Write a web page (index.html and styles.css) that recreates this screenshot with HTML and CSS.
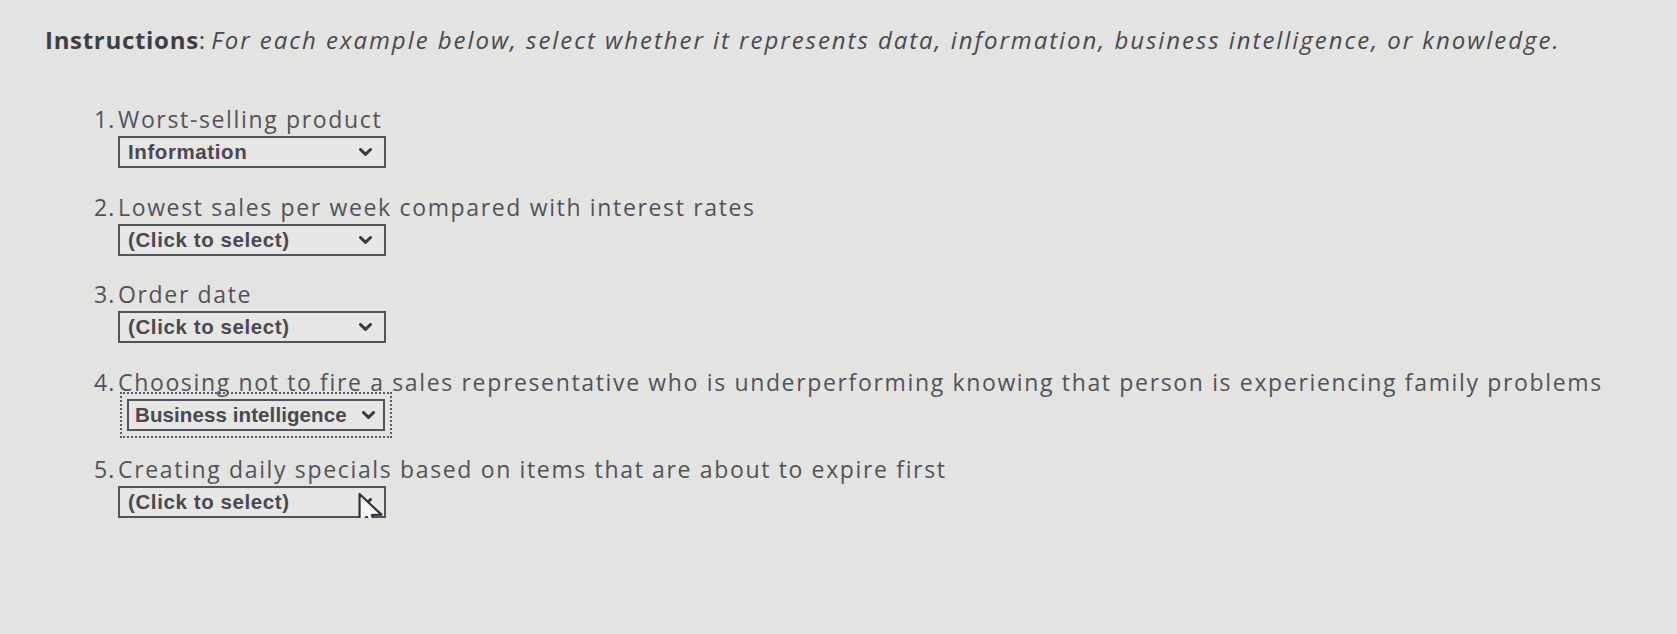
FILE: index.html
```html
<!DOCTYPE html>
<html>
<head>
<meta charset="utf-8">
<link rel="stylesheet" href="styles.css">
</head>
<body>
<div class="page">
  <p class="instructions"><b>Instructions</b>: <i>For each example below, select whether it represents data, information, business intelligence, or knowledge.</i></p>
  <ol class="items">
    <li class="item">
      <span class="num">1.</span>
      <div class="body">
        <div class="label">Worst-selling product</div>
        <div class="select"><span class="val">Information</span><svg class="chev" viewBox="0 0 13 8"><path d="M1.5 1.5 L6.5 6.3 L11.5 1.5" /></svg></div>
      </div>
    </li>
    <li class="item">
      <span class="num">2.</span>
      <div class="body">
        <div class="label">Lowest sales per week compared with interest rates</div>
        <div class="select"><span class="val">(Click to select)</span><svg class="chev" viewBox="0 0 13 8"><path d="M1.5 1.5 L6.5 6.3 L11.5 1.5" /></svg></div>
      </div>
    </li>
    <li class="item">
      <span class="num">3.</span>
      <div class="body">
        <div class="label">Order date</div>
        <div class="select"><span class="val">(Click to select)</span><svg class="chev" viewBox="0 0 13 8"><path d="M1.5 1.5 L6.5 6.3 L11.5 1.5" /></svg></div>
      </div>
    </li>
    <li class="item">
      <span class="num">4.</span>
      <div class="body">
        <div class="label">Choosing not to fire a sales representative who is underperforming knowing that person is experiencing family problems</div>
        <div class="select focused"><span class="val">Business intelligence</span><svg class="chev" viewBox="0 0 13 8"><path d="M1.5 1.5 L6.5 6.3 L11.5 1.5" /></svg></div>
      </div>
    </li>
    <li class="item">
      <span class="num">5.</span>
      <div class="body">
        <div class="label">Creating daily specials based on items that are about to expire first</div>
        <div class="select"><span class="val">(Click to select)</span><svg class="chev" viewBox="0 0 13 8"><path d="M1.5 1.5 L6.5 6.3 L11.5 1.5" /></svg>
          <svg class="cursor" viewBox="0 0 16 25"><path d="M1 1 L1 20 L5.6 15.6 L8.8 23.4 L12 22 L8.9 14.4 L15 14.2 Z" /></svg>
        </div>
      </div>
    </li>
  </ol>
</div>
</body>
</html>
```
FILE: styles.css
```css
html, body {
  margin: 0;
  padding: 0;
  background: #e3e3e1;
}
body {
  font-family: "Open Sans", "Liberation Sans", sans-serif;
  color: #53525a;
}
.page {
  padding: 25px 0 0 45px;
}
.instructions {
  margin: 0;
  font-size: 24px;
  line-height: 30px;
  color: #4a4950;
}
.instructions b {
  font-weight: 700;
  letter-spacing: 0.7px;
  color: #3f3e46;
}
.instructions i {
  font-style: italic;
  letter-spacing: 1.95px;
}
.items {
  list-style: none;
  margin: 47px 0 0 0;
  padding: 0 0 0 49px;
}
.item {
  display: flex;
  margin-top: 21.5px;
}
.item:first-child {
  margin-top: 0;
}
.num {
  font-size: 23px;
  line-height: 34px;
  width: 24px;
  letter-spacing: 1px;
}
.label {
  font-size: 23px;
  line-height: 34px;
  letter-spacing: 1.65px;
}
.select {
  position: relative;
  box-sizing: border-box;
  width: 268px;
  height: 32px;
  border: 2px solid #54525a;
  display: flex;
  align-items: center;
  justify-content: space-between;
  padding: 0 12px 0 8px;
  font-family: "Liberation Sans", Arial, sans-serif;
  font-size: 20.5px;
  font-weight: 700;
  letter-spacing: 0.6px;
  color: #4b4753;
  background: #e6e6e4;
}
.select.focused {
  outline: 2px dotted #4d5c78;
  outline-offset: 5px;
  margin-left: 9px;
  width: 258px;
  padding-right: 8px;
  padding-left: 6px;
  letter-spacing: 0.1px;
}
.chev {
  width: 13px;
  height: 8px;
  fill: none;
  stroke: #3a3842;
  stroke-width: 3;
  stroke-linecap: round;
  stroke-linejoin: round;
}
.cursor {
  position: absolute;
  right: 1px;
  top: 4px;
  width: 25px;
  height: 40px;
  fill: #f6f6f6;
  stroke: #34323c;
  stroke-width: 1.4;
  stroke-linejoin: round;
}
```
